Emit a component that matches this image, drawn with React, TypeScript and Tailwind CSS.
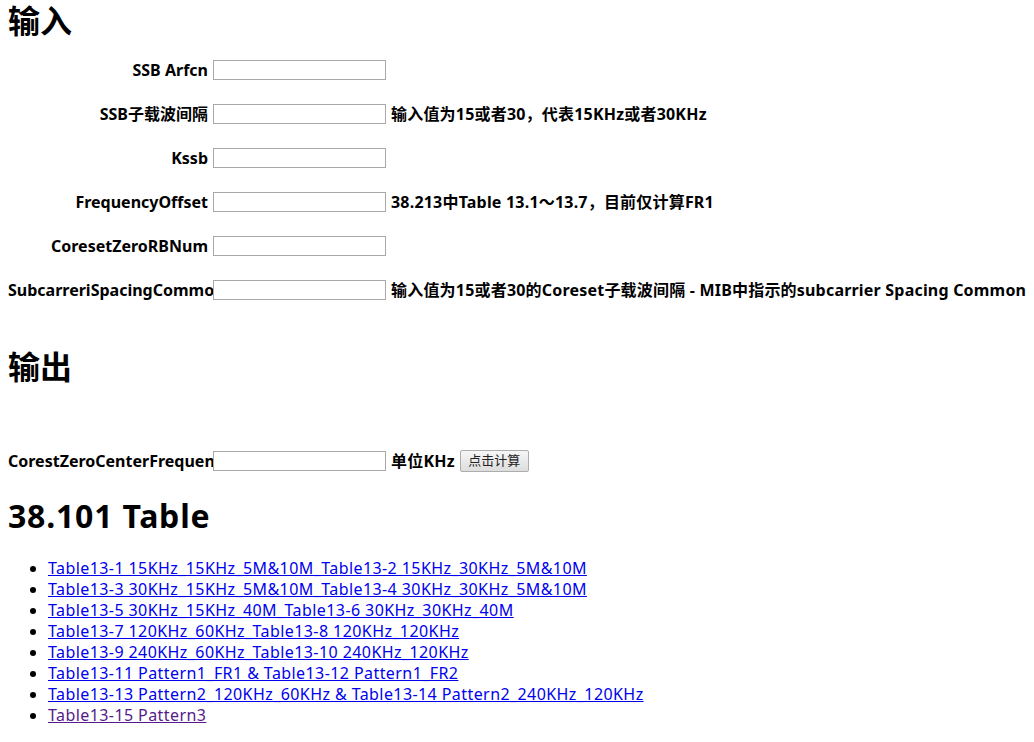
import React from 'react';

const font = { fontFamily: '"Noto Sans", "Noto Sans CJK SC", sans-serif' };

const inputRows = [
  { label: 'SSB Arfcn', note: '' },
  { label: 'SSB子载波间隔', note: '输入值为15或者30，代表15KHz或者30KHz' },
  { label: 'Kssb', note: '' },
  { label: 'FrequencyOffset', note: '38.213中Table 13.1～13.7，目前仅计算FR1' },
  { label: 'CoresetZeroRBNum', note: '' },
  {
    label: 'SubcarreriSpacingCommon',
    note: '输入值为15或者30的Coreset子载波间隔 - MIB中指示的subcarrier Spacing Common',
  },
];

const links = [
  'Table13-1 15KHz_15KHz_5M&10M_Table13-2 15KHz_30KHz_5M&10M',
  'Table13-3 30KHz_15KHz_5M&10M_Table13-4 30KHz_30KHz_5M&10M',
  'Table13-5 30KHz_15KHz_40M_Table13-6 30KHz_30KHz_40M',
  'Table13-7 120KHz_60KHz_Table13-8 120KHz_120KHz',
  'Table13-9 240KHz_60KHz_Table13-10 240KHz_120KHz',
  'Table13-11 Pattern1_FR1 & Table13-12 Pattern1_FR2',
  'Table13-13 Pattern2_120KHz_60KHz & Table13-14 Pattern2_240KHz_120KHz',
  'Table13-15 Pattern3',
];

// label column is fixed width; long names get clipped like the original page
function Row({ label, note, extra }: { label: string; note?: string; extra?: React.ReactNode }) {
  return (
    <div className="flex h-[44px] items-center whitespace-nowrap text-[16px] font-bold text-black">
      <span className="block w-[205px] shrink-0 overflow-hidden pr-[5px] text-right">{label}</span>
      <input
        type="text"
        className="h-[20px] w-[173px] shrink-0 border border-[#a9a9a9] bg-white outline-none"
      />
      {note ? <span className="ml-[5px] tracking-[0.2px]">{note}</span> : null}
      {extra}
    </div>
  );
}

export default function App() {
  return (
    <div className="min-h-screen bg-white px-2 text-black" style={font}>
      <h1 className="mb-[6px] text-[32px] font-bold leading-[42px]">输入</h1>
      {inputRows.map((r) => (
        <Row key={r.label} label={r.label} note={r.note} />
      ))}

      <h1 className="mt-[34px] text-[32px] font-bold leading-[42px]">输出</h1>
      <div className="mt-[51px]">
        <Row
          label="CorestZeroCenterFrequency"
          note="单位KHz"
          extra={
            <button className="ml-[5px] h-[22px] w-[69px] rounded-[2px] border border-[#adadad] bg-gradient-to-b from-[#f6f6f6] to-[#dddddd] text-[13px] font-normal text-[#222]">
              点击计算
            </button>
          }
        />
      </div>

      <h1 className="mt-[12px] text-[32px] font-bold leading-[42px] tracking-[0.8px]">38.101 Table</h1>
      <ul className="mt-[21px] list-disc pl-[40px] text-[16px] leading-[21px] tracking-[0.42px]">
        {links.map((t, i) => (
          <li key={t}>
            <a
              href="#"
              className={`underline ${i === links.length - 1 ? 'text-[#551a8b]' : 'text-[#0000ee]'}`}
            >
              {t}
            </a>
          </li>
        ))}
      </ul>
    </div>
  );
}
